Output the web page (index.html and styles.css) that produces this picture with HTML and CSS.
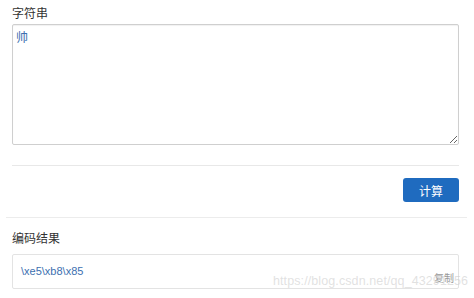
FILE: index.html
```html
<!DOCTYPE html>
<html>
<head>
<meta charset="utf-8">
<link rel="stylesheet" href="styles.css">
</head>
<body>
<div class="page">
  <section class="panel">
    <div class="label">字符串</div>
    <textarea class="input">帅</textarea>
    <div class="rule"></div>
    <div class="actions"><button class="btn">计算</button></div>
  </section>
  <div class="rule-wide"></div>
  <section class="panel">
    <div class="label label-2">编码结果</div>
    <div class="result">
      <span class="result-text">\xe5\xb8\x85</span>
      <span class="copy">复制</span>
    </div>
  </section>
  <div class="watermark">https://blog.csdn.net/qq_43291256</div>
</div>
</body>
</html>
```
FILE: styles.css
```css
html, body {
  margin: 0;
  padding: 0;
  background: #fff;
}
.page {
  position: relative;
  width: 474px;
  height: 298px;
  padding: 0 7px 0 6px;
  box-sizing: border-box;
  font-family: "Noto Sans CJK SC", "Liberation Sans", sans-serif;
  overflow: hidden;
}
.panel {
  padding: 0 8px 0 6px;
  display: flex;
  flex-direction: column;
}
.label {
  font-size: 12px;
  color: #333;
  line-height: 14px;
  height: 14px;
  margin-top: 6px;
}
.input {
  margin-top: 4px;
  width: 447px;
  height: 121px;
  box-sizing: border-box;
  border: 1px solid #cfcfcf;
  border-radius: 2px;
  box-shadow: inset 0 1px 1px rgba(0,0,0,0.06);
  padding: 5px 3px;
  font-family: "Noto Sans CJK SC", sans-serif;
  font-size: 12px;
  line-height: 14px;
  color: #3d6fb0;
  resize: vertical;
  outline: none;
}
.rule {
  margin-top: 20px;
  height: 1px;
  background: #e8e8e8;
}
.actions {
  display: flex;
  justify-content: flex-end;
  margin-top: 12px;
}
.btn {
  width: 56px;
  height: 24px;
  border: none;
  border-radius: 3px;
  background: #1f6bbf;
  color: #fff;
  font-family: "Noto Sans CJK SC", sans-serif;
  font-size: 12px;
  padding: 0;
  margin: 0;
}
.rule-wide {
  margin-top: 15px;
  height: 1px;
  background: #ececec;
}
.label-2 {
  margin-top: 13px;
}
.result {
  margin-top: 9px;
  width: 447px;
  height: 35px;
  box-sizing: border-box;
  border: 1px solid #e3e3e3;
  border-radius: 2px;
  position: relative;
  display: flex;
  align-items: center;
  padding-left: 8px;
}
.result-text {
  font-family: "Liberation Sans", sans-serif;
  font-size: 11px;
  color: #3d6fb0;
  margin-top: -1px;
}
.copy {
  position: absolute;
  right: 4px;
  bottom: 4px;
  font-size: 10px;
  line-height: 12px;
  color: #999;
}
.watermark {
  position: absolute;
  left: 273px;
  top: 274px;
  font-family: "Liberation Sans", sans-serif;
  font-size: 12.5px;
  letter-spacing: 0.1px;
  color: rgba(205,205,205,0.6);
  white-space: nowrap;
}
```
